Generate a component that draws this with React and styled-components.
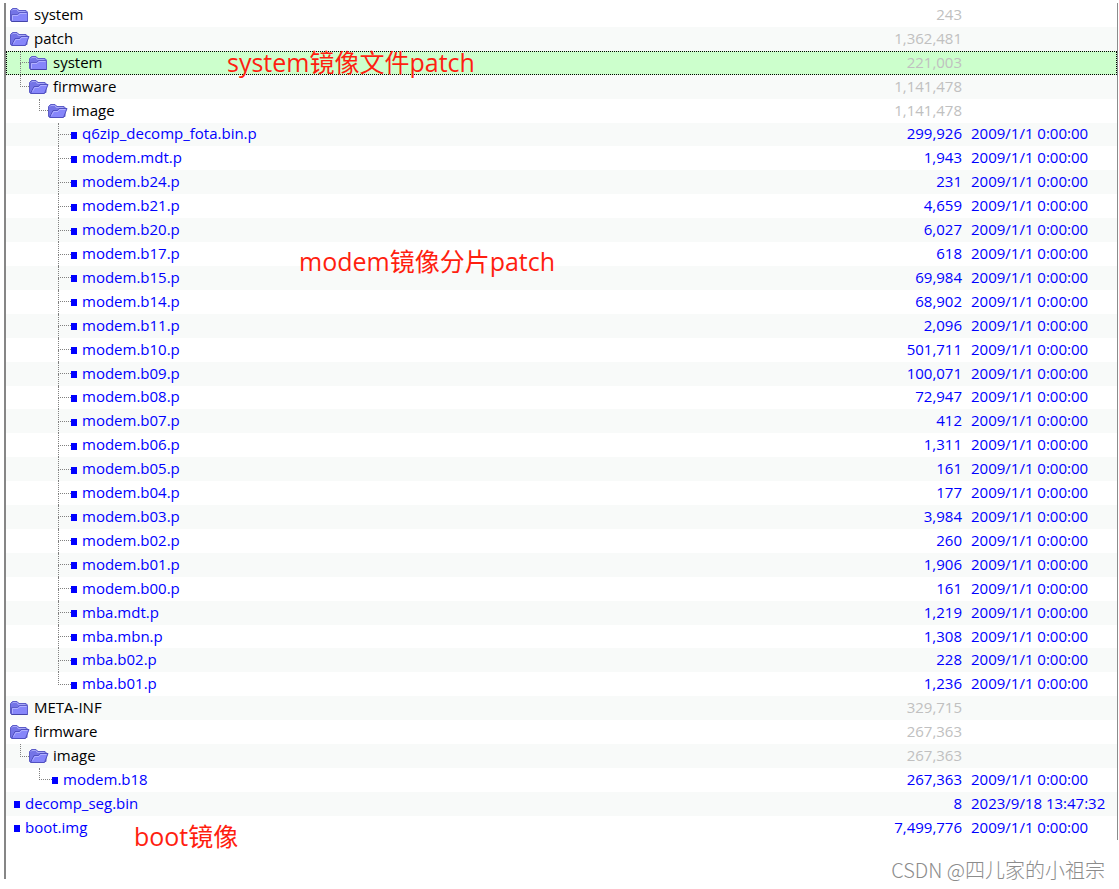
import styled, { createGlobalStyle } from 'styled-components';
import React from 'react';

const folder = (level, name, size, extra) => ({ kind: 'folder', level, name, size, ...extra });
const file = (level, name, size, date = '2009/1/1 0:00:00', extra) => ({ kind: 'file', level, name, size, date, ...extra });

const imageFiles = [
  ['q6zip_decomp_fota.bin.p', '299,926'],
  ['modem.mdt.p', '1,943'],
  ['modem.b24.p', '231'],
  ['modem.b21.p', '4,659'],
  ['modem.b20.p', '6,027'],
  ['modem.b17.p', '618'],
  ['modem.b15.p', '69,984'],
  ['modem.b14.p', '68,902'],
  ['modem.b11.p', '2,096'],
  ['modem.b10.p', '501,711'],
  ['modem.b09.p', '100,071'],
  ['modem.b08.p', '72,947'],
  ['modem.b07.p', '412'],
  ['modem.b06.p', '1,311'],
  ['modem.b05.p', '161'],
  ['modem.b04.p', '177'],
  ['modem.b03.p', '3,984'],
  ['modem.b02.p', '260'],
  ['modem.b01.p', '1,906'],
  ['modem.b00.p', '161'],
  ['mba.mdt.p', '1,219'],
  ['mba.mbn.p', '1,308'],
  ['mba.b02.p', '228'],
  ['mba.b01.p', '1,236'],
];

const entries = [
  folder(0, 'system', '243'),
  folder(0, 'patch', '1,362,481', { open: true }),
  folder(1, 'system', '221,003', { selected: true }),
  folder(1, 'firmware', '1,141,478', { open: true, last: true }),
  folder(2, 'image', '1,141,478', { open: true, last: true }),
  ...imageFiles.map(([name, size], i) =>
    file(3, name, size, undefined, { last: i === imageFiles.length - 1 })
  ),
  folder(0, 'META-INF', '329,715'),
  folder(0, 'firmware', '267,363', { open: true }),
  folder(1, 'image', '267,363', { open: true, last: true }),
  file(2, 'modem.b18', '267,363', undefined, { last: true }),
  file(0, 'decomp_seg.bin', '8', '2023/9/18 13:47:32'),
  file(0, 'boot.img', '7,499,776'),
];

function FolderIcon({ open }) {
  return (
    <FolderSvg viewBox="0 0 20 16" aria-hidden="true">
      <path d="M0.5 13.5V3.5L2.5 1.5H7L9 3.5H16L17 4.5V13.5Z" fill="#7474e6" stroke="#5c5cc8" />
      <path d="M2 3.5L3 2.5H6.8L8.2 4.5H15.5" fill="none" stroke="#a8a8f6" />
      {open ? (
        <>
          <path d="M1.5 14.5L5 7.5H9.5L11 5.5H19L15.5 14.5Z" fill="#8686fa" stroke="#5050c0" />
          <path d="M3.5 12.5L5.8 8.5H10L11.5 6.5H17.5" fill="none" stroke="#b0b0ff" />
        </>
      ) : (
        <>
          <path d="M1.5 14.5V7.5H7.5L9.5 5.5H17.5V14.5Z" fill="#8686fa" stroke="#5c5cc8" />
          <path d="M2.5 13.5V8.5H8L10 6.5H16.5" fill="none" stroke="#b0b0ff" />
          <path d="M1.5 14.5H17.5" fill="none" stroke="#4444a8" />
        </>
      )}
    </FolderSvg>
  );
}

function TreeRow({ entry }) {
  const { kind, level, name, size, date, open, last, selected } = entry;
  return (
    <Row $selected={selected} $kind={kind}>
      <NameCell>
        <Entry $level={level}>
          {level > 0 && (
            <Branch>
              <Elbow $long={kind === 'file'} />
              <Stem $hidden={last} />
            </Branch>
          )}
          {kind === 'folder' ? <FolderIcon open={open} /> : <FileMark />}
          <Name>{name}</Name>
        </Entry>
      </NameCell>
      <SizeCell $dim={kind === 'folder'}>{size}</SizeCell>
      <DateCell>{date}</DateCell>
    </Row>
  );
}

export default function App() {
  return (
    <Page>
      <GlobalStyle />
      <Pane>
        <Tree>
          <colgroup>
            <col />
            <SizeCol />
            <DateCol />
          </colgroup>
          <tbody>
            {entries.map((entry, i) => (
              <TreeRow key={i} entry={entry} />
            ))}
          </tbody>
        </Tree>
      </Pane>
      <Note $left={227} $top={44}>system镜像文件patch</Note>
      <Note $left={299} $top={243}>modem镜像分片patch</Note>
      <Note $left={134} $top={818}>boot镜像</Note>
      <Watermark>CSDN @四儿家的小祖宗</Watermark>
    </Page>
  );
}

const GlobalStyle = createGlobalStyle`
  * {
    box-sizing: border-box;
  }
  body {
    margin: 0;
    background: #fff;
    font-family: 'Open Sans', 'Noto Sans CJK SC', sans-serif;
    font-size: 15px;
    line-height: 20px;
  }
`;

const Page = styled.main`
  position: relative;
  min-height: 100vh;
  padding: 3px 1px 10px 4px;
`;

const Pane = styled.section`
  min-height: calc(100vh - 13px);
  border-left: 2px solid #868686;
`;

// fills the pane down to the blank strip under the last row
const Tree = styled.table`
  width: 100%;
  height: calc(100vh - 52px);
  table-layout: fixed;
  border-collapse: separate;
  border-spacing: 0;
  border-right: 1px solid #8c8c8c;
`;

const SizeCol = styled.col`
  width: 120px;
`;

const DateCol = styled.col`
  width: 151px;
`;

const Row = styled.tr`
  height: 22px;
  color: ${({ $kind }) => ($kind === 'folder' ? '#000' : '#00f')};
  background: ${({ $selected }) => ($selected ? '#ccffcc' : '#fff')};
  outline: ${({ $selected }) => ($selected ? '1px dotted #000' : 'none')};
  outline-offset: -1px;

  &:nth-child(even) {
    background: #f8faf9;
  }
`;

const NameCell = styled.td`
  height: 22px;
  padding: 0;
`;

const Entry = styled.div`
  display: flex;
  align-items: center;
  height: 100%;
  padding-left: ${({ $level }) => ($level > 0 ? $level * 19 - 5 : 4)}px;
  white-space: nowrap;
`;

const Name = styled.span`
  padding-bottom: 2px;
`;

const Branch = styled.span`
  display: flex;
  flex-direction: column;
  align-self: stretch;
  width: 9px;
`;

const Elbow = styled.span`
  flex: 1;
  width: ${({ $long }) => ($long ? 13 : 9)}px;
  border-left: 1px dotted #808080;
  border-bottom: 1px dotted #808080;
`;

const Stem = styled.span`
  flex: 1;
  border-left: ${({ $hidden }) => ($hidden ? 'none' : '1px dotted #808080')};
`;

const FolderSvg = styled.svg`
  flex: none;
  width: 20px;
  height: 16px;
  margin-right: 4px;
`;

const FileMark = styled.span`
  flex: none;
  width: 6px;
  height: 7px;
  margin: 2px 5px 0 4px;
  background: #00f;
`;

const SizeCell = styled.td`
  padding: 0 4px 2px 0;
  text-align: right;
  color: ${({ $dim }) => ($dim ? '#c0c0c0' : 'inherit')};
`;

const DateCell = styled.td`
  padding: 0 0 2px 5px;
  white-space: nowrap;
`;

const Note = styled.div`
  position: absolute;
  top: ${({ $top }) => $top}px;
  left: ${({ $left }) => $left}px;
  font-size: 25px;
  line-height: 36px;
  white-space: nowrap;
  color: #ff1e10;
`;

const Watermark = styled.div`
  position: absolute;
  right: 14px;
  bottom: 4px;
  font-family: 'Noto Sans CJK SC', sans-serif;
  font-size: 20px;
  font-weight: 300;
  line-height: 30px;
  color: #8c8c8c;
`;
